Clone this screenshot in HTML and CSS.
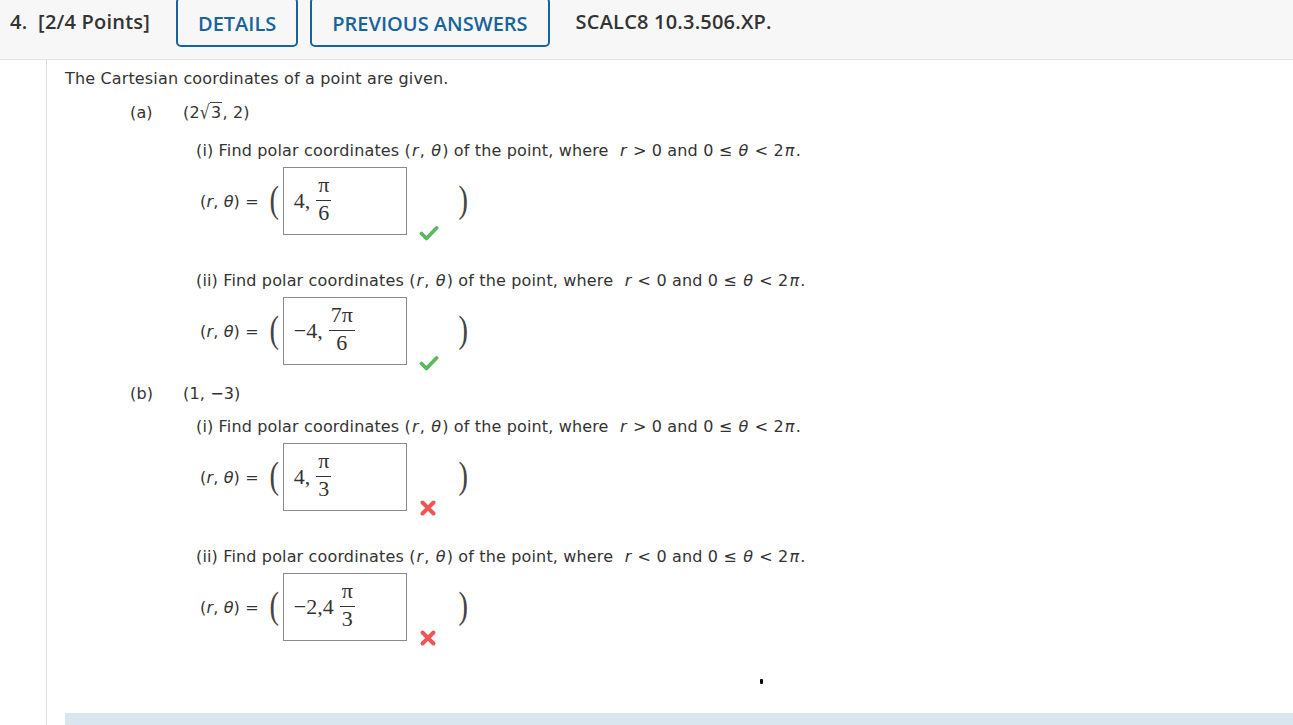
FILE: index.html
```html
<!DOCTYPE html>
<html lang="en">
<head>
    <meta charset="UTF-8">
    <meta name="viewport" content="width=device-width, initial-scale=1.0">
    <title>Question 4</title>
    <link rel="stylesheet" href="styles.css">
</head>

<body>
    <header class="qhead">
        <span class="qnum">4.&nbsp; [2/4 Points]</span>
        <button class="tab">DETAILS</button>
        <button class="tab">PREVIOUS ANSWERS</button>
        <span class="qref">SCALC8 10.3.506.XP.</span>
    </header>

    <div class="qbody">
        <p class="intro">The Cartesian coordinates of a point are given.</p>

        <div class="part part-a">
            <div class="part-head">
                <span class="part-label">(a)</span>
                <span>(2<span class="sqrt"><span class="rad">&radic;</span><span class="under">3</span></span>, 2)</span>
            </div>

            <div class="sub">
                <div class="sub-head">(i) Find polar coordinates (<i>r</i>, <i>&theta;</i>) of the point, where &nbsp;<i>r</i> &gt; 0 and 0 &le; <i>&theta;</i> &lt; 2<i>&pi;</i>.</div>
                <div class="answer">
                    <span class="ans-label">(<i>r</i>, <i>&theta;</i>) =</span>
                    <span class="paren">(</span>
                    <div class="box"><span class="math">4,<span class="frac"><span class="num">&pi;</span><span class="den">6</span></span></span></div>
                    <span class="mark">
                        <svg width="20" height="16" viewBox="0 0 20 16"><path d="M2.5 8.5 L7.5 13.5 L17.5 3" fill="none" stroke="#5cb85c" stroke-width="3.8" stroke-linecap="round" stroke-linejoin="round"/></svg>
                    </span>
                    <span class="paren">)</span>
                </div>
            </div>

            <div class="sub">
                <div class="sub-head">(ii) Find polar coordinates (<i>r</i>, <i>&theta;</i>) of the point, where &nbsp;<i>r</i> &lt; 0 and 0 &le; <i>&theta;</i> &lt; 2<i>&pi;</i>.</div>
                <div class="answer">
                    <span class="ans-label">(<i>r</i>, <i>&theta;</i>) =</span>
                    <span class="paren">(</span>
                    <div class="box"><span class="math">&minus;4,<span class="frac"><span class="num">7&pi;</span><span class="den">6</span></span></span></div>
                    <span class="mark">
                        <svg width="20" height="16" viewBox="0 0 20 16"><path d="M2.5 8.5 L7.5 13.5 L17.5 3" fill="none" stroke="#5cb85c" stroke-width="3.8" stroke-linecap="round" stroke-linejoin="round"/></svg>
                    </span>
                    <span class="paren">)</span>
                </div>
            </div>
        </div>

        <div class="part part-b">
            <div class="part-head">
                <span class="part-label">(b)</span>
                <span>(1, &minus;3)</span>
            </div>

            <div class="sub">
                <div class="sub-head">(i) Find polar coordinates (<i>r</i>, <i>&theta;</i>) of the point, where &nbsp;<i>r</i> &gt; 0 and 0 &le; <i>&theta;</i> &lt; 2<i>&pi;</i>.</div>
                <div class="answer">
                    <span class="ans-label">(<i>r</i>, <i>&theta;</i>) =</span>
                    <span class="paren">(</span>
                    <div class="box"><span class="math">4,<span class="frac"><span class="num">&pi;</span><span class="den">3</span></span></span></div>
                    <span class="mark">
                        <svg width="18" height="18" viewBox="0 0 18 18"><path d="M3.5 3.5 L14.5 14.5 M14.5 3.5 L3.5 14.5" fill="none" stroke="#f05555" stroke-width="4" stroke-linecap="round"/></svg>
                    </span>
                    <span class="paren">)</span>
                </div>
            </div>

            <div class="sub">
                <div class="sub-head">(ii) Find polar coordinates (<i>r</i>, <i>&theta;</i>) of the point, where &nbsp;<i>r</i> &lt; 0 and 0 &le; <i>&theta;</i> &lt; 2<i>&pi;</i>.</div>
                <div class="answer">
                    <span class="ans-label">(<i>r</i>, <i>&theta;</i>) =</span>
                    <span class="paren">(</span>
                    <div class="box"><span class="math">&minus;2,4<span class="frac"><span class="num">&pi;</span><span class="den">3</span></span></span></div>
                    <span class="mark">
                        <svg width="18" height="18" viewBox="0 0 18 18"><path d="M3.5 3.5 L14.5 14.5 M14.5 3.5 L3.5 14.5" fill="none" stroke="#f05555" stroke-width="4" stroke-linecap="round"/></svg>
                    </span>
                    <span class="paren">)</span>
                </div>
            </div>
        </div>

        <div class="dot-row"><span class="dot"></span></div>
        <div class="next-bar"></div>
    </div>
</body>

</html>
```

FILE: styles.css
```css
body {
    margin: 0;
    font-family: "DejaVu Sans", Verdana, sans-serif;
    font-size: 16px;
    letter-spacing: 0.15px;
    color: #333;
    background: #fff;
    overflow: hidden;
}

.qhead {
    display: flex;
    align-items: flex-start;
    height: 59px;
    background: #f7f7f7;
    border-bottom: 1px solid #e2e2e2;
    padding-left: 10px;
    font-family: "Open Sans", sans-serif;
    font-size: 20px;
    font-weight: 600;
    letter-spacing: 0.2px;
}

.qnum, .qref {
    line-height: 44px;
    color: #333;
}

.tab {
    margin: -3px 0 0 12px;
    height: 50px;
    padding: 2px 20px 0;
    border: 2px solid #17639c;
    border-radius: 5px;
    background: #f7f7f7;
    color: #17639c;
    font-family: inherit;
    font-size: 20px;
    font-weight: 600;
    letter-spacing: 0;
}

.qnum + .tab {
    margin-left: 26px;
}

.qref {
    margin-left: 26px;
}

.qbody {
    margin-left: 46px;
    border-left: 1px solid #ddd;
    padding: 9px 0 0 18px;
}

.intro {
    margin: 0;
    line-height: 20px;
}

.part-head {
    display: flex;
    line-height: 20px;
}

.part-a .part-head {
    margin-top: 14px;
}

.part-b .part-head {
    margin-top: 19px;
}

.part-label {
    width: 53px;
    margin-left: 65px;
}

.sqrt {
    white-space: nowrap;
}

.rad {
    display: inline-block;
    transform: scaleY(1.2);
    color: #444;
}

.under {
    border-top: 1px solid #444;
    padding: 0 1px;
}

.sub {
    margin-left: 131px;
    margin-top: 36px;
}

.part-a .part-head + .sub {
    margin-top: 18px;
}

.part-b .part-head + .sub {
    margin-top: 13px;
}

.sub-head {
    line-height: 20px;
}

.sub-head i {
    padding: 0 1px;
}

.answer {
    display: flex;
    align-items: center;
    margin: 6px 0 0 4px;
}

.ans-label {
    width: 68px;
}

.paren {
    font-family: "Liberation Serif", serif;
    font-size: 38px;
    line-height: 40px;
    color: #444;
    transform: scaleX(0.75);
    margin-top: -4px;
}

.ans-label + .paren {
    margin-right: 2px;
}

.box {
    height: 66px;
    width: 112px;
    border: 1px solid #8a8a8a;
    display: flex;
    align-items: center;
    padding-left: 10px;
}

.math {
    font-family: "Liberation Serif", serif;
    font-size: 22px;
    letter-spacing: 0;
    color: #333;
    display: flex;
    align-items: center;
}

.frac {
    display: inline-flex;
    flex-direction: column;
    align-items: stretch;
    line-height: 22px;
    margin: -4px 0 0 6px;
    text-align: center;
}

.frac .num {
    padding: 0 2px 4px;
}

.frac .den {
    border-top: 1px solid #333;
    padding: 1px 2px 0;
}

.mark {
    align-self: flex-end;
    width: 50px;
    margin-bottom: -10px;
    padding-left: 12px;
    box-sizing: border-box;
}

.dot-row {
    margin-top: 38px;
    padding-left: 695px;
    height: 5px;
}

.dot {
    display: block;
    width: 3px;
    height: 5px;
    border-radius: 1px;
    background: #000;
}

.next-bar {
    margin-top: 29px;
    height: 12px;
    background: #dae6ef;
}
```
